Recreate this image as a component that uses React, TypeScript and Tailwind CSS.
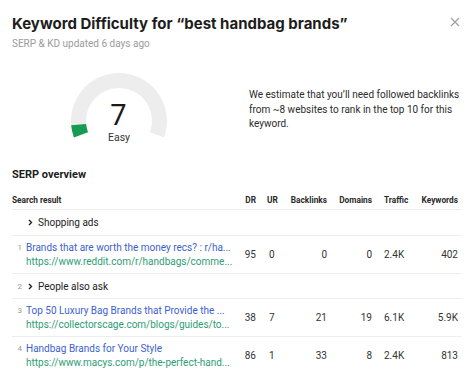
import React from "react";

const font = { fontFamily: "Roboto, 'Noto Sans', sans-serif" };

function Chevron() {
  return (
    <svg width="5" height="7" viewBox="0 0 5 7" className="shrink-0">
      <polyline points="1,1 3.5,3.5 1,6" fill="none" stroke="#222" strokeWidth="1.4" />
    </svg>
  );
}

function Gauge() {
  const cx = 50;
  const cy = 55;
  const r = 40.5;
  const pt = (deg: number) => {
    const a = (deg * Math.PI) / 180;
    return [cx + r * Math.cos(a), cy - r * Math.sin(a)];
  };
  const [sx, sy] = pt(200);
  const [ex, ey] = pt(-20);
  const [gx, gy] = pt(185);
  return (
    <svg width="100" height="80" viewBox="0 0 100 80">
      <path
        d={`M ${sx} ${sy} A ${r} ${r} 0 1 1 ${ex} ${ey}`}
        fill="none"
        stroke="#ededed"
        strokeWidth="15"
      />
      <path
        d={`M ${sx} ${sy} A ${r} ${r} 0 0 1 ${gx} ${gy}`}
        fill="none"
        stroke="#169b52"
        strokeWidth="15"
      />
      <text x="49.5" y="59" textAnchor="middle" fontSize="29" fill="#1a1a1a" style={font}>
        7
      </text>
      <text x="50" y="75" textAnchor="middle" fontSize="10.5" fill="#333" style={font}>
        Easy
      </text>
    </svg>
  );
}

type Row =
  | { kind: "group"; num?: string; label: string }
  | {
      kind: "result";
      num: string;
      title: string;
      url: string;
      dr: string;
      ur: string;
      bl: string;
      dom: string;
      tr: string;
      kw: string;
    };

const rows: Row[] = [
  { kind: "group", label: "Shopping ads" },
  {
    kind: "result",
    num: "1",
    title: "Brands that are worth the money recs? : r/ha...",
    url: "https://www.reddit.com/r/handbags/comme...",
    dr: "95",
    ur: "0",
    bl: "0",
    dom: "0",
    tr: "2.4K",
    kw: "402",
  },
  { kind: "group", num: "2", label: "People also ask" },
  {
    kind: "result",
    num: "3",
    title: "Top 50 Luxury Bag Brands that Provide the ...",
    url: "https://collectorscage.com/blogs/guides/to...",
    dr: "38",
    ur: "7",
    bl: "21",
    dom: "19",
    tr: "6.1K",
    kw: "5.9K",
  },
  {
    kind: "result",
    num: "4",
    title: "Handbag Brands for Your Style",
    url: "https://www.macys.com/p/the-perfect-hand...",
    dr: "86",
    ur: "1",
    bl: "33",
    dom: "8",
    tr: "2.4K",
    kw: "813",
  },
];

const gridCols = "grid grid-cols-[226px_18px_26px_45px_45px_36px_56px] items-center";

export default function App() {
  return (
    <div className="w-[474px] h-[371px] bg-white overflow-hidden text-[#333]" style={font}>
      <div className="px-3 pt-[14px]">
        <div className="flex justify-between items-start">
          <h2
            className="text-[15px] leading-[20px] font-bold text-[#1d1d1d]"
            style={{ fontFamily: "Inter, Roboto, sans-serif" }}
          >
            Keyword Difficulty for “best handbag brands”
          </h2>
          <svg width="10" height="10" viewBox="0 0 10 10" className="mt-[3px] mr-[2px]">
            <path d="M1 1 L9 9 M9 1 L1 9" stroke="#a3a3a3" strokeWidth="1.3" />
          </svg>
        </div>
        <div className="text-[10px] leading-[14px] text-[#9b9b9b] mt-[3px]">
          SERP &amp; KD updated 6 days ago
        </div>
      </div>

      <div className="flex mt-[15px] h-[102px]">
        <div className="w-[237px] pl-[69px]">
          <Gauge />
        </div>
        <p className="pl-[12px] pt-[22px] w-[230px] text-[10px] leading-[14.5px] text-[#2b2b2b]">
          We estimate that you’ll need followed backlinks from ~8 websites to rank in the top 10 for
          this keyword.
        </p>
      </div>

      <div className="px-3">
        <div className="text-[11px] font-bold text-[#1d1d1d] leading-[14px]">SERP overview</div>
        <div className={`${gridCols} h-[18px] mt-[10px] border-b border-[#eeeeee] text-[8.3px] font-bold text-[#2a2a2a]`}>
          <div>Search result</div>
          <div className="text-right">DR</div>
          <div className="pl-[11px]">UR</div>
          <div className="text-right">Backlinks</div>
          <div className="text-right">Domains</div>
          <div className="pl-[12px]">Traffic</div>
          <div className="text-right pr-[6px]">Keywords</div>
        </div>
        {rows.map((row, i) =>
          row.kind === "group" ? (
            <div
              key={i}
              className={`${gridCols} ${row.num ? "h-[25px]" : "h-[26px]"} border-b border-[#eeeeee]`}
            >
              <div className="flex items-center">
                <span className="w-[10px] shrink-0 text-right text-[8px] text-[#999] pt-[2px]">{row.num ?? ""}</span>
                <span className="ml-[6px]">
                  <Chevron />
                </span>
                <span className="ml-[5px] text-[10px] text-[#222]">{row.label}</span>
              </div>
            </div>
          ) : (
            <div key={i} className={`${gridCols} h-[38px] border-b border-[#eeeeee] text-[10px] text-[#333]`}>
              <div className="flex min-w-0">
                <span className="w-[10px] shrink-0 text-right text-[8px] text-[#999] leading-[14px]">{row.num}</span>
                <div className="ml-[4px] flex flex-col whitespace-nowrap">
                  <span className="leading-[13.5px] text-[#3d5fcf]">{row.title}</span>
                  <span className="leading-[13.5px] text-[#2e9d74]">{row.url}</span>
                </div>
              </div>
              <div className="text-right">{row.dr}</div>
              <div className="pl-[13px]">{row.ur}</div>
              <div className="text-right">{row.bl}</div>
              <div className="text-right">{row.dom}</div>
              <div className="pl-[12px]">{row.tr}</div>
              <div className="text-right pr-[6px]">{row.kw}</div>
            </div>
          )
        )}
      </div>
    </div>
  );
}
